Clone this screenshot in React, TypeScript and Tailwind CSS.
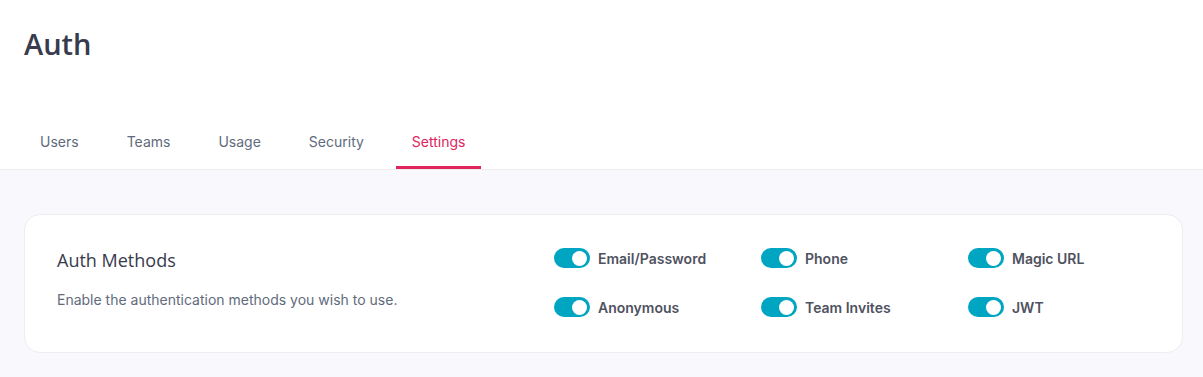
import { useState } from 'react';

const TABS = ['Users', 'Teams', 'Usage', 'Security', 'Settings'];

const METHODS = [
  'Email/Password',
  'Phone',
  'Magic URL',
  'Anonymous',
  'Team Invites',
  'JWT',
];

function Toggle({ on, onClick }: { on: boolean; onClick: () => void }) {
  return (
    <button
      onClick={onClick}
      className={`flex h-5 w-9 items-center rounded-full px-[3px] ${on ? 'justify-end bg-[#00a5c2]' : 'justify-start bg-[#c4c6d7]'}`}
    >
      <span className="h-[15px] w-[15px] rounded-full bg-white" />
    </button>
  );
}

export default function App() {
  const [enabled, setEnabled] = useState<Record<string, boolean>>(
    Object.fromEntries(METHODS.map((m) => [m, true])),
  );

  return (
    <div className="min-h-[377px] bg-[#f9f9fd] font-['Inter',sans-serif]">
      {/* Header */}
      <div className="border-b border-[#ededf0] bg-white">
        <h1 className="px-6 pt-[26px] font-['Open_Sans',sans-serif] text-[29px] font-semibold leading-9 text-[#373b4d]">
          Auth
        </h1>
        <div className="mt-[59px] flex gap-4 px-6">
          {TABS.map((tab) => {
            const active = tab === 'Settings';
            return (
              <div
                key={tab}
                className={`flex h-12 items-center border-b-[3px] px-4 pb-[4px] text-[14px] ${active ? 'border-[#e0245e] text-[#e0245e]' : 'border-transparent text-[#616b7c]'}`}
              >
                {tab}
              </div>
            );
          })}
        </div>
      </div>

      {/* Auth methods card */}
      <div className="pb-6 pl-6 pr-5 pt-11">
        <div className="flex rounded-2xl border border-[#ededf0] bg-white px-8 pb-[33px] pt-[31px]">
          <div className="w-[497px] shrink-0">
            <h2 className="font-['Open_Sans',sans-serif] text-[18px] leading-7 text-[#373b4d]">
              Auth Methods
            </h2>
            <p className="mt-4 text-[14px] leading-5 text-[#616b7c]">
              Enable the authentication methods you wish to use.
            </p>
          </div>
          <div className="grid grid-cols-[207px_207px_207px] gap-y-[25px]">
            {METHODS.map((m) => (
              <div key={m} className="flex h-6 items-center gap-2">
                <Toggle
                  on={enabled[m]}
                  onClick={() => setEnabled({ ...enabled, [m]: !enabled[m] })}
                />
                <span className="text-[14px] font-semibold text-[#4f5260]">{m}</span>
              </div>
            ))}
          </div>
        </div>
      </div>
    </div>
  );
}
